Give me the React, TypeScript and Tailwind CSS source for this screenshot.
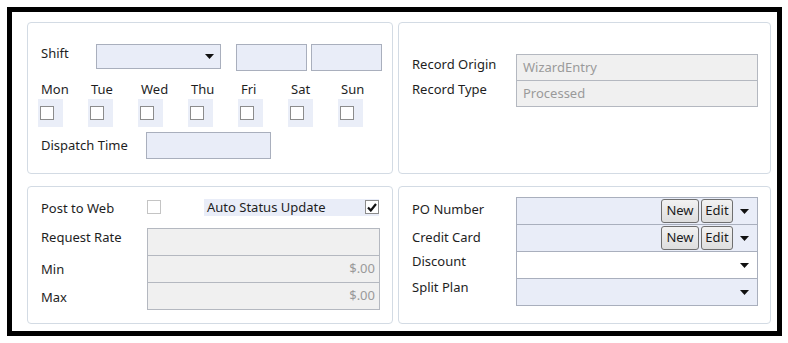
const font = { fontFamily: '"Noto Sans", "Open Sans", sans-serif' };

function Caret() {
  return (
    <svg width="9" height="5" viewBox="0 0 9 5" className="shrink-0">
      <path d="M0 0 H9 L4.5 5 Z" fill="#111" />
    </svg>
  );
}

function Check({ checked, dim }: { checked?: boolean; dim?: boolean }) {
  return (
    <div
      className={
        "w-[14px] h-[14px] bg-white border flex items-center justify-center " +
        (dim ? "border-[#c4c4c4]" : "border-[#8c8c8c]")
      }
    >
      {checked && (
        <svg width="10" height="9" viewBox="0 0 10 9">
          <path d="M1 4.5 L3.8 7.5 L9 1" stroke="#111" strokeWidth="2.2" fill="none" />
        </svg>
      )}
    </div>
  );
}

function Btn({ label, w }: { label: string; w: string }) {
  return (
    <div
      className={
        w +
        " h-[24px] rounded-[3px] border border-[#6f6f6f] bg-gradient-to-b from-[#f2f2f2] to-[#dedede] flex items-center justify-center text-[13px] text-[#1b1b1b]"
      }
    >
      {label}
    </div>
  );
}

const days = ["Mon", "Tue", "Wed", "Thu", "Fri", "Sat", "Sun"];

export default function App() {
  return (
    <div className="w-[788px] h-[343px] bg-white pl-[7px] pt-[7px] text-[13px] text-[#1e1e1e]" style={font}>
      <div className="w-[775px] h-[329px] border-[5px] border-black pl-[15px] pt-[10px]">
        <div className="grid grid-cols-[366px_373px] grid-rows-[152px_138px] gap-x-[5px] gap-y-[12px]">
          {/* top left */}
          <div className="border border-[#d3dbe4] rounded-[4px] pt-[21px]">
            <div className="flex h-[27px] pl-[13px]">
              <span className="w-[55px] leading-[16px] pt-[1px]">Shift</span>
              <div className="w-[125px] h-[25px] bg-[#e9edf8] border border-[#a9afbd] flex items-center justify-end pr-[6px]">
                <Caret />
              </div>
              <div className="ml-[15px] w-[71px] h-[27px] bg-[#e9edf8] border border-[#a9afbd]" />
              <div className="ml-[4px] w-[71px] h-[27px] bg-[#e9edf8] border border-[#a9afbd]" />
            </div>
            <div className="flex pl-[10px] mt-[10px]">
              {days.map((d) => (
                <div key={d} className="w-[50px] flex flex-col">
                  <span className="pl-[3px] leading-[16px]">{d}</span>
                  <div className="mt-[2px] w-[25px] h-[28px] bg-[#eaeef8] pl-[2px] pt-[7px]">
                    <Check />
                  </div>
                </div>
              ))}
            </div>
            <div className="flex mt-[5px] pl-[13px]">
              <span className="w-[105px] leading-[16px] pt-[5px]">Dispatch Time</span>
              <div className="w-[125px] h-[27px] bg-[#e9edf8] border border-[#a9afbd]" />
            </div>
          </div>

          {/* top right */}
          <div className="border border-[#d3dbe4] rounded-[4px] pt-[31px] pl-[13px]">
            <div className="flex h-[27px]">
              <span className="w-[104px] leading-[16px] pt-[2px]">Record Origin</span>
              <div className="w-[242px] h-[27px] bg-[#f0f0f0] border border-[#b4b8c0] pl-[6px] flex items-center text-[#9a9a9a]">
                WizardEntry
              </div>
            </div>
            <div className="flex h-[27px] -mt-px">
              <span className="w-[104px] leading-[16px] pt-[1px]">Record Type</span>
              <div className="w-[242px] h-[27px] bg-[#f0f0f0] border border-[#b4b8c0] pl-[6px] flex items-center text-[#9a9a9a]">
                Processed
              </div>
            </div>
          </div>

          {/* bottom left */}
          <div className="border border-[#d3dbe4] rounded-[4px] pt-[12px] pl-[13px]">
            <div className="flex h-[17px]">
              <span className="w-[106px] leading-[16px] pt-[1px]">Post to Web</span>
              <div className="pt-[1px]">
                <Check dim />
              </div>
              <div className="ml-[43px] w-[175px] h-[17px] bg-[#e9edf8] flex items-center justify-between pl-[3px]">
                <span className="leading-[16px] -mt-[2px]">Auto Status Update</span>
                <div className="pt-[1px] self-start">
                  <Check checked />
                </div>
              </div>
            </div>
            <div className="flex h-[28px] mt-[12px]">
              <span className="w-[106px] leading-[16px] pt-[1px]">Request Rate</span>
              <div className="w-[233px] h-[28px] bg-[#f0f0f0] border border-[#b4b8c0]" />
            </div>
            <div className="flex h-[28px] -mt-px">
              <span className="w-[106px] leading-[16px] pt-[6px]">Min</span>
              <div className="w-[233px] h-[28px] bg-[#f0f0f0] border border-[#b4b8c0] flex items-center justify-end pr-[4px] text-[#9a9a9a]">
                $.00
              </div>
            </div>
            <div className="flex h-[28px] -mt-px">
              <span className="w-[106px] leading-[16px] pt-[7px]">Max</span>
              <div className="w-[233px] h-[28px] bg-[#f0f0f0] border border-[#b4b8c0] flex items-center justify-end pr-[4px] text-[#9a9a9a]">
                $.00
              </div>
            </div>
          </div>

          {/* bottom right */}
          <div className="border border-[#d3dbe4] rounded-[4px] pt-[10px] pl-[13px]">
            {[
              { label: "PO Number", btns: true, bg: "bg-[#e9edf8]", pt: "pt-[4px]" },
              { label: "Credit Card", btns: true, bg: "bg-[#e9edf8]", pt: "pt-[5px]" },
              { label: "Discount", btns: false, bg: "bg-white", pt: "pt-[2px]" },
              { label: "Split Plan", btns: false, bg: "bg-[#e9edf8]", pt: "pt-[1px]" },
            ].map((r, i) => (
              <div key={r.label} className={"flex h-[28px] " + (i > 0 ? "-mt-px" : "")}>
                <span className={"w-[104px] leading-[16px] " + r.pt}>{r.label}</span>
                <div className={"w-[242px] h-[28px] border border-[#a9afbd] flex items-center justify-end " + r.bg}>
                  {r.btns && (
                    <div className="flex gap-[2px]">
                      <Btn label="New" w="w-[38px]" />
                      <Btn label="Edit" w="w-[32px]" />
                    </div>
                  )}
                  <div className="w-[24px] flex justify-center pr-[1px]">
                    <Caret />
                  </div>
                </div>
              </div>
            ))}
          </div>
        </div>
      </div>
    </div>
  );
}
